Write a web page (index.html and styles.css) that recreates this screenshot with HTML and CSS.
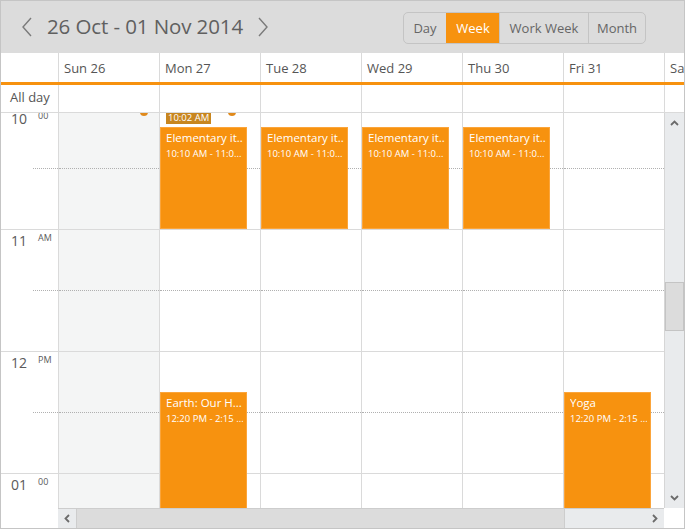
FILE: index.html
```html
<!DOCTYPE html>
<html lang="en">
<head>
<meta charset="utf-8">
<title>Scheduler - Week</title>
<link rel="stylesheet" href="styles.css">
</head>
<body>
<div class="scheduler">
  <div class="toolbar">
    <div class="nav">
      <span class="nav-arrow"><svg width="12" height="20" viewBox="0 0 12 20"><path d="M10 1 L2 10 L10 19" fill="none" stroke="#7a7a7a" stroke-width="1.4"/></svg></span>
      <span class="title">26 Oct - 01 Nov 2014</span>
      <span class="nav-arrow"><svg width="12" height="20" viewBox="0 0 12 20"><path d="M2 1 L10 10 L2 19" fill="none" stroke="#7a7a7a" stroke-width="1.4"/></svg></span>
    </div>
    <div class="views">
      <span class="view v-day">Day</span>
      <span class="view v-week active">Week</span>
      <span class="view v-work">Work Week</span>
      <span class="view v-month">Month</span>
    </div>
  </div>

  <div class="row head">
    <div class="cell"></div>
    <div class="cell">Sun 26</div>
    <div class="cell">Mon 27</div>
    <div class="cell">Tue 28</div>
    <div class="cell">Wed 29</div>
    <div class="cell">Thu 30</div>
    <div class="cell">Fri 31</div>
    <div class="cell">Sat 01</div>
  </div>

  <div class="row allday">
    <div class="cell label">All day</div>
    <div class="cell"></div>
    <div class="cell"></div>
    <div class="cell"></div>
    <div class="cell"></div>
    <div class="cell"></div>
    <div class="cell"></div>
    <div class="cell"></div>
  </div>

  <div class="body">
    <div class="viewport">
      <div class="grid">
        <div class="times">
          <div class="thour"><div class="tlabel"><span class="hh">10</span><span class="mm">00</span></div><div class="tdot"></div></div>
          <div class="thour"><div class="tlabel"><span class="hh">11</span><span class="mm">AM</span></div><div class="tdot"></div></div>
          <div class="thour"><div class="tlabel"><span class="hh">12</span><span class="mm">PM</span></div><div class="tdot"></div></div>
          <div class="thour"><div class="tlabel"><span class="hh">01</span><span class="mm">00</span></div><div class="tdot"></div></div>
        </div>

        <div class="day off">
          <div class="hour"><div class="half"></div></div>
          <div class="hour"><div class="half"></div></div>
          <div class="hour"><div class="half"></div></div>
          <div class="hour"><div class="half"></div></div>
          <span class="marker m-sun"></span>
        </div>

        <div class="day">
          <div class="hour"><div class="half"></div></div>
          <div class="hour"><div class="half"></div></div>
          <div class="hour"><div class="half"></div></div>
          <div class="hour"><div class="half"></div></div>
          <span class="now">10:02 AM</span>
          <span class="marker m-mon"></span>
          <div class="event" style="top:19px;height:102px"><div class="ev-title">Elementary it...</div><div class="ev-time">10:10 AM - 11:0...</div></div>
          <div class="event" style="top:284px;height:240px"><div class="ev-title">Earth: Our H...</div><div class="ev-time">12:20 PM - 2:15 ...</div></div>
        </div>

        <div class="day">
          <div class="hour"><div class="half"></div></div>
          <div class="hour"><div class="half"></div></div>
          <div class="hour"><div class="half"></div></div>
          <div class="hour"><div class="half"></div></div>
          <div class="event" style="top:19px;height:102px"><div class="ev-title">Elementary it...</div><div class="ev-time">10:10 AM - 11:0...</div></div>
        </div>

        <div class="day">
          <div class="hour"><div class="half"></div></div>
          <div class="hour"><div class="half"></div></div>
          <div class="hour"><div class="half"></div></div>
          <div class="hour"><div class="half"></div></div>
          <div class="event" style="top:19px;height:102px"><div class="ev-title">Elementary it...</div><div class="ev-time">10:10 AM - 11:0...</div></div>
        </div>

        <div class="day">
          <div class="hour"><div class="half"></div></div>
          <div class="hour"><div class="half"></div></div>
          <div class="hour"><div class="half"></div></div>
          <div class="hour"><div class="half"></div></div>
          <div class="event" style="top:19px;height:102px"><div class="ev-title">Elementary it...</div><div class="ev-time">10:10 AM - 11:0...</div></div>
        </div>

        <div class="day">
          <div class="hour"><div class="half"></div></div>
          <div class="hour"><div class="half"></div></div>
          <div class="hour"><div class="half"></div></div>
          <div class="hour"><div class="half"></div></div>
          <div class="event" style="top:284px;height:240px"><div class="ev-title">Yoga</div><div class="ev-time">12:20 PM - 2:15 ...</div></div>
        </div>

        <div class="day off">
          <div class="hour"><div class="half"></div></div>
          <div class="hour"><div class="half"></div></div>
          <div class="hour"><div class="half"></div></div>
          <div class="hour"><div class="half"></div></div>
        </div>
      </div>
    </div>
    <div class="vscroll">
      <div class="sbtn"><svg width="9" height="6" viewBox="0 0 9 6"><path d="M1 5 L4.5 1.5 L8 5" fill="none" stroke="#6b6b6b" stroke-width="1.8"/></svg></div>
      <div class="vthumb" style="margin-top:149px"></div>
      <div class="vfill"></div>
      <div class="sbtn"><svg width="9" height="6" viewBox="0 0 9 6"><path d="M1 1 L4.5 4.5 L8 1" fill="none" stroke="#6b6b6b" stroke-width="1.8"/></svg></div>
    </div>
  </div>

  <div class="hbar">
    <div class="hgap"></div>
    <div class="hscroll">
      <div class="hbtn"><svg width="6" height="9" viewBox="0 0 6 9"><path d="M5 1 L1.5 4.5 L5 8" fill="none" stroke="#6b6b6b" stroke-width="1.8"/></svg></div>
      <div class="hthumb" style="width:489px"></div>
      <div class="hfill"></div>
      <div class="hbtn"><svg width="6" height="9" viewBox="0 0 6 9"><path d="M1 1 L4.5 4.5 L1 8" fill="none" stroke="#6b6b6b" stroke-width="1.8"/></svg></div>
    </div>
    <div class="hcorner"></div>
  </div>
</div>
</body>
</html>
```

FILE: styles.css
```css
* { box-sizing: border-box; }

html, body {
  margin: 0;
  padding: 0;
  background: #ffffff;
}

body {
  font-family: "Open Sans", "Noto Sans", "DejaVu Sans", sans-serif;
  color: #555555;
}

.scheduler {
  width: 685px;
  height: 529px;
  border: 1px solid #c5c5c5;
  display: flex;
  flex-direction: column;
  overflow: hidden;
  background: #ffffff;
}

/* Toolbar */
.toolbar {
  height: 52px;
  flex: none;
  background: #dcdcdc;
  display: flex;
  align-items: center;
  justify-content: space-between;
  padding: 0 38px 1px 20px;
}

.nav {
  display: flex;
  align-items: center;
  gap: 12px;
}

.nav-arrow {
  display: flex;
  align-items: center;
  width: 12px;
  height: 20px;
}

.title {
  font-size: 20.5px;
  color: #606060;
  letter-spacing: -0.1px;
  padding: 0 2px 1px;
}

.views {
  display: flex;
  height: 32px;
  border: 1px solid #c4c4c4;
  border-radius: 5px;
  overflow: hidden;
  margin-top: 2px;
}

.view {
  display: flex;
  align-items: center;
  justify-content: center;
  font-size: 13px;
  color: #666666;
  border-left: 1px solid #c4c4c4;
}

.view:first-child { border-left: none; }

.v-day { width: 42px; }
.v-week { width: 53px; }
.v-work { width: 89px; }
.v-month { width: 57px; }

.view.active {
  background: #f7920f;
  color: #ffffff;
  border-left-color: #f7920f;
}

/* Header and all-day rows */
.row {
  display: grid;
  grid-template-columns: 58px repeat(7, 101px);
  flex: none;
  overflow: hidden;
}

.row .cell {
  border-right: 1px solid #dadada;
  display: flex;
  align-items: center;
  font-size: 13px;
  color: #555555;
  white-space: nowrap;
}

.head {
  height: 32px;
  border-bottom: 3px solid #f7920f;
}

.head .cell {
  padding-left: 5px;
  padding-bottom: 0;
}

.allday {
  height: 28px;
  border-bottom: 1px solid #dadada;
}

.allday .cell.label {
  padding-left: 9px;
  padding-bottom: 4px;
}

/* Body */
.body {
  display: flex;
  height: 395px;
  flex: none;
}

.viewport {
  width: 663px;
  overflow: hidden;
}

.grid {
  display: grid;
  grid-template-columns: 58px repeat(7, 101px);
  width: 765px;
  margin-top: -5px;
  position: relative;
}

.times {
  border-right: 1px solid #dadada;
}

.thour {
  height: 122px;
  border-bottom: 1px solid #dadada;
}

.tlabel {
  height: 60px;
  display: flex;
  align-items: flex-start;
  padding-left: 10px;
}

.hh {
  font-size: 14px;
  color: #5a5a5a;
  width: 27px;
  line-height: 16px;
  margin-top: 3px;
}

.mm {
  font-size: 9px;
  color: #5a5a5a;
  line-height: 10px;
  margin-top: 3px;
}

.tdot {
  margin-left: 32px;
  border-top: 1px dotted #b0b0b0;
}

.day {
  position: relative;
  border-right: 1px solid #dadada;
}

.day.off {
  background: #f4f5f5;
}

.hour {
  height: 122px;
  border-bottom: 1px solid #dadada;
}

.half {
  height: 61px;
  border-bottom: 1px dotted #b0b0b0;
}

/* Events */
.event {
  position: absolute;
  left: 0;
  width: 87px;
  background: #f7920f;
  border: 1px solid #fba53b;
  color: #ffffff;
  padding: 2px 3px 0 5px;
  overflow: hidden;
}

.ev-title {
  font-size: 11.5px;
  line-height: 16px;
  white-space: nowrap;
  overflow: hidden;
}

.ev-time {
  font-size: 9.5px;
  line-height: 15px;
  white-space: nowrap;
  overflow: hidden;
}

.now {
  position: absolute;
  top: 4px;
  left: 6px;
  height: 12px;
  padding: 0 2px;
  background: #c8861f;
  color: #ffffff;
  font-size: 9.5px;
  line-height: 12px;
  white-space: nowrap;
}

.marker {
  position: absolute;
  top: 0;
  width: 8px;
  height: 8px;
  border-radius: 50%;
  background: #e08a1c;
}

.m-sun { left: 81px; }
.m-mon { left: 68px; }

/* Vertical scrollbar */
.vscroll {
  width: 20px;
  border-left: 1px solid #d6d6d6;
  background: #e9ebed;
  display: flex;
  flex-direction: column;
}

.sbtn {
  height: 20px;
  flex: none;
  display: flex;
  align-items: center;
  justify-content: center;
}

.vthumb {
  height: 49px;
  flex: none;
  background: #dcdcdc;
  border: 1px solid #c4c4c4;
}

.vfill { flex: 1; }

/* Horizontal scrollbar */
.hbar {
  display: flex;
  height: 20px;
  flex: none;
}

.hgap {
  width: 57px;
  background: #ffffff;
}

.hscroll {
  width: 606px;
  display: flex;
  background: #e9ebed;
  border-top: 1px solid #cdcdcd;
}

.hbtn {
  width: 18px;
  flex: none;
  display: flex;
  align-items: center;
  justify-content: center;
}

.hthumb {
  flex: none;
  background: #dcdcdc;
  border-left: 1px solid #cdcdcd;
  border-right: 1px solid #cdcdcd;
}

.hfill { flex: 1; }

.hcorner {
  flex: 1;
  background: #ffffff;
}
```
